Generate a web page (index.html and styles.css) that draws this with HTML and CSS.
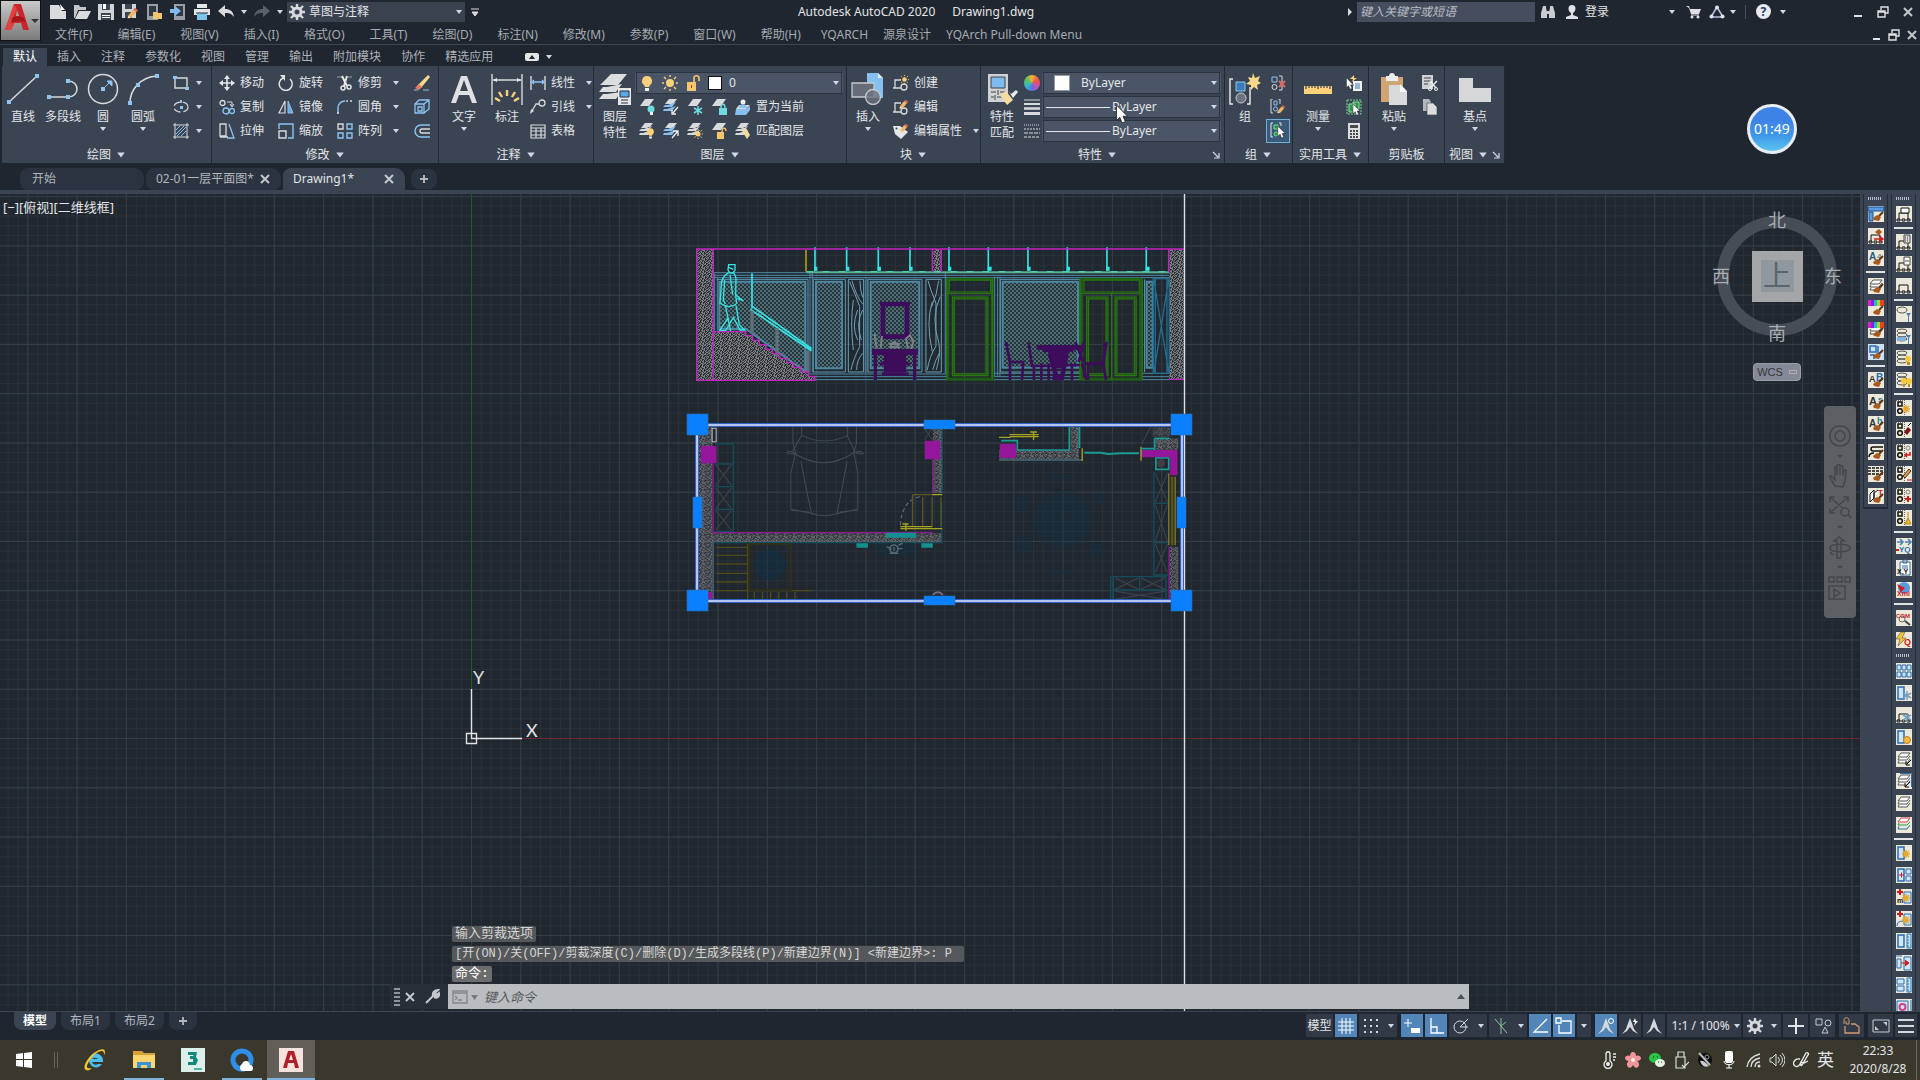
FILE: index.html
```
<!DOCTYPE html>
<html lang="zh-CN">
<head>
  <meta charset="utf-8">
  <title>Autodesk AutoCAD 2020 - Drawing1.dwg</title>
  <link rel="stylesheet" href="styles.css">
</head>
<body>
  <!-- shared icons -->
  <svg class="defs" width="0" height="0">
    <symbol id="caret" viewBox="0 0 8 8"><path d="M1 2h6L4 6z" fill="#d0d8e4"/></symbol>
    <symbol id="close" viewBox="0 0 12 12"><path d="M2 2l8 8M10 2l-8 8" stroke="#c3c7cc" stroke-width="2"/></symbol>
    <symbol id="restore" viewBox="0 0 12 12"><path d="M4 4V1h7v6H8M1 5h7v6H1zM1 6h7" fill="none" stroke="#e0e2e5" stroke-width="1.4"/></symbol>
    <symbol id="sheet" viewBox="0 0 16 16"><path d="M6 3h9l-5 7H1z" fill="#d9dadb"/></symbol>
    <symbol id="sheets" viewBox="0 0 16 16"><path d="M6 0h8l-4 5H2zM5 6H2L0 8h9l4-5M4 10H1l-1 2h9l4-5" fill="#d9dadb"/></symbol>
    <symbol id="bluesheets" viewBox="0 0 16 16"><path d="M6 0h8l-4 5H2z" fill="#d9dadb"/><path d="M5 6H2L0 8h9l4-5M4 10H1l-1 2h9l4-5" fill="#86bff0"/></symbol>
    <symbol id="bulb" viewBox="0 0 16 16"><path d="M8 1a5 5 0 0 0-3 9l1 2h4l1-2a5 5 0 0 0-3-9z" fill="#fbd27a"/><path d="M6 13h4v3H6z" fill="#eee"/></symbol>
    <symbol id="sun" viewBox="0 0 16 16"><circle cx="8" cy="8" r="4" fill="#fbd27a"/><path d="M8 0v2M8 14v2M0 8h2M14 8h2M2 2l2 2M12 12l2 2M14 2l-2 2M4 12l-2 2" stroke="#fbd27a" stroke-width="1.4"/></symbol>
    <symbol id="pencil" viewBox="0 0 16 16"><path d="M2 14l1-4 4 3z" fill="#fbe3b0"/><path d="M3 10L9 3l4 3-6 7z" fill="#f3b765"/><path d="M9 3l2-2 4 3-2 2z" fill="#d9655c"/></symbol>
    <symbol id="cursor" viewBox="0 0 12 18"><path d="M1 1v14l3-3 2 5 3-1-2-5h4z" fill="#fff" stroke="#222" stroke-width=".8"/></symbol>
    <symbol id="launch" viewBox="0 0 10 10"><path d="M2 2l5 5M8 3v5H3" fill="none" stroke="#d0d8e4" stroke-width="1.2"/></symbol>
    <symbol id="gear" viewBox="0 0 16 16"><circle cx="8" cy="8" r="4" fill="none" stroke="#d5d8dc" stroke-width="3"/><path d="M8 0v3M8 13v3M0 8h3M13 8h3M2 2l3 3M11 11l3 3M14 2l-3 3M5 11l-3 3" stroke="#d5d8dc" stroke-width="2.4"/></symbol>
    <symbol id="compass" viewBox="0 0 18 18"><path d="M9 1l3 8 1 3 4 5-5-3-3-4-3 4-5 3 4-5 1-3z" fill="#d5d8dc"/></symbol>
  </svg>

  <header class="app-header">
    <button class="app-button" aria-label="AutoCAD">
      <svg width="41" height="40" viewBox="0 0 41 40"><path d="M5 29L14 3h7l8 26h-6l-2-7h-7l-3 7z" fill="#c9252c"/><path d="M14 3l3 5-7 15 6-3-5 9H5z" fill="#e2423f"/><path d="M12 17c5-3 9-1 12 0l1 4c-5-2-9-1-13 1z" fill="#a3161c"/><path d="M16 15l1-6 2 6z" fill="#aaa"/><path d="M31 18h8l-4 4z" fill="#333"/></svg>
    </button>
    <div class="title-row">
      <div class="quick-access">
        <button aria-label="新建"><svg width="18" height="16"><path d="M1 1h9l3 6h4v8H1z" fill="#dadbdc"/><path d="M11 0l5 6h-4z" fill="#fff"/></svg></button>
        <button aria-label="打开"><svg width="18" height="16"><path d="M1 1h5l1 2h6v3H5l-3 8H1z" fill="#c5c6c8"/><path d="M6 7h12l-4 8H2z" fill="#dadbdc"/></svg></button>
        <button aria-label="保存"><svg width="18" height="16"><path d="M1 0h16v16H1z" fill="#d2d3d5"/><path d="M5 0h8v6H5zM4 9h10v7H4z" fill="#3b4453"/><path d="M6 0h3v5H6zM5 11h8v1H5zM5 13h8v1H5z" fill="#fff"/></svg></button>
        <button aria-label="另存为"><svg width="18" height="16"><path d="M1 0h14v14H1z" fill="#d2d3d5"/><path d="M4 0h7v5H4zM4 8h7v6H4z" fill="#3b4453"/><use href="#pencil" x="5" y="3" width="13" height="13"/></svg></button>
        <button aria-label="从移动设备打开"><svg width="18" height="16"><path d="M2 0h11v16H2z" fill="#9a9da2"/><path d="M4 2h7v10H4z" fill="#313945"/><path d="M8 8h4l1 1h4v6H8z" fill="#f5c66b"/></svg></button>
        <button aria-label="保存到移动设备"><svg width="18" height="16"><path d="M5 0h11v16H5z" fill="#9a9da2"/><path d="M7 2h7v10H7z" fill="#313945"/><path d="M1 5h5V2l6 5-6 5V9H1z" fill="#7dbdf0"/></svg></button>
        <button aria-label="打印"><svg width="18" height="16"><path d="M4 0h10v4H4zM1 5h16v6H1z" fill="#e5e6e7"/><path d="M4 9h10v7H4z" fill="#7cc3e8"/><path d="M3 9h12" stroke="#26303c"/></svg></button>
        <button aria-label="放弃"><svg width="18" height="16"><path d="M1 7l7-6v4c5 0 8 2 9 8-3-4-5-4-9-4v4z" fill="#dadbdc"/></svg></button>
        <button class="slim" aria-label="放弃列表"><svg width="8" height="8"><use href="#caret"/></svg></button>
        <button aria-label="重做"><svg width="18" height="16"><path d="M17 7l-7-6v4C5 5 2 7 1 13c3-4 5-4 9-4v4z" fill="#59606b"/></svg></button>
        <button class="slim" aria-label="重做列表"><svg width="8" height="8"><use href="#caret"/></svg></button>
      </div>
      <label class="workspace">
        <svg width="16" height="16"><use href="#gear"/></svg>
        <select aria-label="工作空间"><option>草图与注释</option></select>
        <svg width="8" height="8"><use href="#caret"/></svg>
      </label>
      <button class="overflow" aria-label="自定义"><svg width="10" height="8"><path d="M1 1h8M2 4h6L5 8z" fill="#dadbdc" stroke="#dadbdc"/></svg></button>
      <h1 class="app-title"><span>Autodesk AutoCAD 2020</span><span>Drawing1.dwg</span></h1>
      <div class="info-center">
        <svg width="6" height="10"><path d="M1 1l4 4-4 4z" fill="#dadbdc"/></svg>
        <input type="text" aria-label="搜索" placeholder="键入关键字或短语">
        <button aria-label="搜索"><svg width="14" height="14"><path d="M2 1h3v2l1 4v6H0V8zM9 1h3l2 7v5H8V7l1-4zM6 6h2v3H6z" fill="#c9ccd0"/></svg></button>
        <button class="login"><svg width="14" height="14"><path d="M7 0c5 0 4 7 1 8v2l5 2v2H1v-2l5-2V8C3 7 2 0 7 0z" fill="#dfe1e4"/></svg>登录</button>
        <button class="slim login-caret" aria-label="登录列表"><svg width="8" height="8"><use href="#caret"/></svg></button>
        <button aria-label="商店"><svg width="15" height="14"><path d="M0 1h3l1 3h11l-2 5H5L3 3" fill="#dfe1e4"/><path d="M5 10h8" stroke="#dfe1e4"/><circle cx="6" cy="12" r="1.500" fill="#dfe1e4"/><circle cx="12" cy="12" r="1.500" fill="#dfe1e4"/></svg></button>
        <button class="a360" aria-label="Autodesk 360"><svg width="16" height="14"><path d="M8 2L2 12h12z" fill="none" stroke="#b7bedb" stroke-width="1.600"/><circle cx="8" cy="2.500" r="2" fill="#dfe1f0"/><circle cx="2.500" cy="11.500" r="2" fill="#dfe1f0"/><circle cx="13.500" cy="11.500" r="2" fill="#dfe1f0"/></svg><svg width="8" height="8"><use href="#caret"/></svg></button>
        <button class="help" aria-label="帮助"><b>?</b><svg width="8" height="8"><use href="#caret"/></svg></button>
      </div>
      <div class="window-buttons">
        <button aria-label="最小化"><svg width="12" height="12"><path d="M2 10h8" stroke="#e0e2e5" stroke-width="2"/></svg></button>
        <button aria-label="还原"><svg width="12" height="12"><use href="#restore"/></svg></button>
        <button aria-label="关闭"><svg width="12" height="12"><use href="#close"/></svg></button>
      </div>
    </div>
    <div class="menu-row">
      <nav class="menu">
        <a href="#">文件(F)</a><a href="#">编辑(E)</a><a href="#">视图(V)</a><a href="#">插入(I)</a><a href="#">格式(O)</a><a href="#">工具(T)</a><a href="#">绘图(D)</a><a href="#">标注(N)</a><a href="#">修改(M)</a><a href="#">参数(P)</a><a href="#">窗口(W)</a><a href="#">帮助(H)</a><a href="#" class="extra">YQARCH</a><a href="#" class="extra">源泉设计</a><a href="#" class="extra">YQArch Pull-down Menu</a>
      </nav>
      <div class="window-buttons small">
        <button aria-label="最小化图形"><svg width="11" height="12"><path d="M2 10h7" stroke="#e0e2e5" stroke-width="2"/></svg></button>
        <button aria-label="还原图形"><svg width="12" height="12"><use href="#restore"/></svg></button>
        <button aria-label="关闭图形"><svg width="12" height="12"><use href="#close"/></svg></button>
      </div>
    </div>
  </header>

  <nav class="ribbon-tabs">
    <a href="#" class="active">默认</a><a href="#">插入</a><a href="#">注释</a><a href="#">参数化</a><a href="#">视图</a><a href="#">管理</a><a href="#">输出</a><a href="#">附加模块</a><a href="#">协作</a><a href="#">精选应用</a>
    <button aria-label="最小化功能区"><svg width="14" height="10"><rect y="1" width="14" height="8" rx="2" fill="#e3e5e7"/><path d="M4 7h6L7 3z" fill="#222"/></svg><svg width="8" height="8"><use href="#caret"/></svg></button>
  </nav>

  <div class="ribbon">
    <section class="panel draw">
      <div class="panel-body">
        <button class="big"><svg width="34" height="32"><path d="M3 29L31 3" stroke="#d8dadd" stroke-width="1.500"/><path d="M1 27h4v4H1zM29 1h4v4h-4z" fill="#8cc4f2"/></svg>直线</button>
        <button class="big"><svg width="34" height="32"><path d="M3 24h19c12 0 12-16 0-16" fill="none" stroke="#d8dadd" stroke-width="1.500"/><path d="M1 22h4v4H1zM20 22h4v4h-4zM20 6h4v4h-4z" fill="#8cc4f2"/></svg>多段线</button>
        <button class="big"><svg width="32" height="32"><circle cx="16" cy="16" r="14.500" fill="none" stroke="#d8dadd" stroke-width="1.500"/><path d="M16 16l7-7M20 8h5v5z" stroke="#8cc4f2" fill="#8cc4f2"/><path d="M14 14h4v4h-4z" fill="#8cc4f2"/></svg>圆<svg width="8" height="8"><use href="#caret"/></svg></button>
        <button class="big"><svg width="32" height="32"><path d="M3 30C3 16 14 4 30 3" fill="none" stroke="#d8dadd" stroke-width="1.500"/><path d="M1 28h4v4H1zM9 10h4v4H9zM28 1h4v4h-4z" fill="#8cc4f2"/></svg>圆弧<svg width="8" height="8"><use href="#caret"/></svg></button>
        <div class="stack icons">
          <button aria-label="矩形"><svg width="16" height="16"><path d="M2 3h12v10H2z" fill="none" stroke="#d8dadd" stroke-width="1.400"/><path d="M0 1h4v3H0zM12 12h4v3h-4z" fill="#8cc4f2"/></svg><svg width="8" height="8"><use href="#caret"/></svg></button>
          <button aria-label="椭圆"><svg width="16" height="16"><ellipse cx="8" cy="8" rx="7" ry="5" fill="none" stroke="#d8dadd" stroke-width="1.300" stroke-dasharray="7 3"/><path d="M7 7h3v3H7zM7 1h2v3H7z" fill="#8cc4f2"/></svg><svg width="8" height="8"><use href="#caret"/></svg></button>
          <button aria-label="图案填充"><svg width="16" height="16"><path d="M0 2h16M0 14h16M2 0v16M14 0v16" stroke="#d8dadd"/><path d="M3 7l4-4M3 11l8-8M4 13l9-9M8 13l5-5" stroke="#8cc4f2"/></svg><svg width="8" height="8"><use href="#caret"/></svg></button>
        </div>
      </div>
      <h2>绘图<svg width="10" height="10"><use href="#caret"/></svg></h2>
    </section>

    <section class="panel modify">
      <div class="panel-body">
        <div class="stack">
          <button><svg width="16" height="16"><path d="M8 1v14M1 8h14" stroke="#e5e6e8" stroke-width="1.600"/><path d="M8 0l3 4H5zM8 16l3-4H5zM0 8l4-3v6zM16 8l-4-3v6z" fill="#e5e6e8"/></svg>移动</button>
          <button><svg width="16" height="16"><circle cx="3.500" cy="4" r="2.500" fill="none" stroke="#d8dadd" stroke-width="1.300"/><circle cx="7" cy="12" r="3" fill="none" stroke="#8cc4f2" stroke-width="1.300"/><circle cx="13" cy="12" r="2.500" fill="none" stroke="#8cc4f2" stroke-width="1.300"/><path d="M8 3h5v4M11 5l2 3 2-3" fill="none" stroke="#d8dadd"/></svg>复制</button>
          <button><svg width="16" height="16"><path d="M1 1h6v12H1zM1 14h8" fill="none" stroke="#d8dadd" stroke-width="1.300"/><path d="M10 1l5 14H8" fill="none" stroke="#8cc4f2" stroke-width="1.300"/></svg>拉伸</button>
        </div>
        <div class="stack">
          <button><svg width="16" height="16"><path d="M5 3a6.500 6.500 0 1 0 7 1" fill="none" stroke="#e0e2e4" stroke-width="1.500"/><path d="M2 0h5v6z" fill="#e0e2e4"/></svg>旋转</button>
          <button><svg width="16" height="16"><path d="M7 2v12H1z" fill="none" stroke="#d8dadd" stroke-width="1.200"/><path d="M10 2v12h5z" fill="#6aa7dc" stroke="#8cc4f2"/></svg>镜像</button>
          <button><svg width="16" height="16"><path d="M1 6V1h14v14h-5" fill="none" stroke="#8cc4f2" stroke-width="1.400"/><path d="M1 8h7v7H1z" fill="none" stroke="#d8dadd" stroke-width="1.400"/></svg>缩放</button>
        </div>
        <div class="stack">
          <button><svg width="16" height="16"><path d="M0 2h5M11 2h4" stroke="#9aa1ab"/><path d="M5 1l5 10M10 1L7 11" stroke="#e5e6e8" stroke-width="2"/><circle cx="6" cy="13" r="2" fill="none" stroke="#e5e6e8" stroke-width="1.500"/><circle cx="12" cy="12" r="2" fill="none" stroke="#e5e6e8" stroke-width="1.500"/></svg>修剪<svg class="caret" width="8" height="8"><use href="#caret"/></svg></button>
          <button><svg width="16" height="16"><path d="M1 15V9c0-4 3-7 7-7" fill="none" stroke="#8cc4f2" stroke-width="1.500"/><path d="M9 2h2M13 2h2M1 13v2" stroke="#d8dadd" stroke-width="1.500"/></svg>圆角<svg class="caret" width="8" height="8"><use href="#caret"/></svg></button>
          <button><svg width="16" height="16"><path d="M1 1h5v5H1z" fill="none" stroke="#d8dadd" stroke-width="1.400"/><path d="M10 1h5v5h-5zM1 10h5v5H1zM10 10h5v5h-5z" fill="none" stroke="#8cc4f2" stroke-width="1.400"/></svg>阵列<svg class="caret" width="8" height="8"><use href="#caret"/></svg></button>
        </div>
        <div class="stack">
          <button aria-label="删除"><svg width="16" height="16"><path d="M14 0l2 2-9 11-4-2z" fill="#fbd68d"/><path d="M5 9l3 3-3 3-4-2z" fill="#ea7a66"/><path d="M0 15h4M9 15h6" stroke="#8cc4f2"/></svg></button>
          <button aria-label="分解"><svg width="16" height="16"><path d="M1 5h9v9H1zM1 5l4-4h10v9l-5 4M10 5l5-4M4 8h4v4H4z" fill="none" stroke="#8cc4f2" stroke-width="1.300"/></svg></button>
          <button aria-label="偏移"><svg width="16" height="16"><path d="M16 2H7a6 6 0 0 0 0 12h9" fill="none" stroke="#8cc4f2" stroke-width="1.400"/><path d="M16 6H8a2 2 0 0 0 0 4h8" fill="none" stroke="#d8dadd" stroke-width="1.300"/></svg></button>
        </div>
      </div>
      <h2>修改<svg width="10" height="10"><use href="#caret"/></svg></h2>
    </section>

    <section class="panel annotate">
      <div class="panel-body">
        <button class="big"><svg width="28" height="32"><path d="M11 3h6l10 27h-5l-3-8H9l-3 8H1zM10 18h8L14 7z" fill="#dfe0e1"/></svg>文字<svg width="8" height="8"><use href="#caret"/></svg></button>
        <button class="big"><svg width="32" height="32"><path d="M1 1v31M31 1v31M2 7h28" stroke="#d8dadd" stroke-width="1.400"/><path d="M2 7l4-2v4zM30 7l-4-2v4z" fill="#e5e6e8"/><path d="M16 17v6M8 19l3 5M24 19l-3 5M4 25l5 3M28 25l-5 3" stroke="#fbd27a" stroke-width="2.400"/></svg>标注</button>
        <div class="stack">
          <button><svg width="16" height="16"><path d="M1 1v14M15 1v14" stroke="#d8dadd" stroke-width="1.400"/><path d="M2 7h12M4 5L2 7l2 2M12 5l2 2-2 2" fill="none" stroke="#8cc4f2" stroke-width="1.300"/></svg>线性<svg class="caret" width="8" height="8"><use href="#caret"/></svg></button>
          <button><svg width="16" height="16"><circle cx="12" cy="4" r="3" fill="none" stroke="#d8dadd" stroke-width="1.300"/><path d="M9 5H6l-4 7" fill="none" stroke="#d8dadd" stroke-width="1.300"/><path d="M0 15l1-5 3 2z" fill="#d8dadd"/></svg>引线<svg class="caret" width="8" height="8"><use href="#caret"/></svg></button>
          <button><svg width="16" height="16"><path d="M1 2h14v13H1zM1 5h14M1 8h14M1 12h14M6 5v10M11 5v10" fill="none" stroke="#d8dadd" stroke-width="1.200"/></svg>表格</button>
        </div>
      </div>
      <h2>注释<svg width="10" height="10"><use href="#caret"/></svg></h2>
    </section>

    <section class="panel layers">
      <div class="panel-body">
        <button class="big tall"><svg width="32" height="32"><path d="M12 1h16l-9 11H1zM8 14H4l-4 5h17l6-8M8 21H4l-4 5h17l5-7" fill="#dcdddd"/><path d="M19 15h13v17H19z" fill="#e5e6e8"/><path d="M21 18h9v6h-9z" fill="#5aa9e6" stroke="#26303c"/><path d="M22 27h7M22 30h7" stroke="#26303c"/></svg>图层<br>特性</button>
        <div class="stack">
          <div class="combo">
            <svg width="16" height="16"><use href="#bulb"/></svg>
            <svg width="16" height="16"><use href="#sun"/></svg>
            <svg width="16" height="16"><path d="M2 7h9v9H2z" fill="#f5c66b"/><path d="M9 7V3c0-3 5-3 5 0v3" fill="none" stroke="#f5c66b" stroke-width="1.600"/><path d="M6 10h1v3H6z" fill="#a33"/></svg>
            <i class="swatch"></i>
            <select aria-label="图层"><option>0</option></select>
            <svg width="8" height="8"><use href="#caret"/></svg>
          </div>
          <div class="tool-row">
            <button aria-label="关"><svg width="16" height="16"><use href="#sheet" y="-3"/><circle cx="12" cy="10" r="3.500" fill="#6fdbe0"/><path d="M11 13h3v3h-3z" fill="#eee"/></svg></button>
            <button aria-label="隔离"><svg width="16" height="16"><use href="#bluesheets"/><path d="M15 8l-5 6M9 11v4h4" fill="none" stroke="#eee" stroke-width="1.300"/></svg></button>
            <button aria-label="冻结"><svg width="16" height="16"><use href="#sheet" y="-3"/><path d="M11 7v9M7 9l8 5M15 9l-8 5" stroke="#6fdbe0" stroke-width="1.500"/></svg></button>
            <button aria-label="锁定"><svg width="16" height="16"><use href="#sheet" y="-3"/><path d="M8 9h8v7H8z" fill="#6fdbe0"/><path d="M10 9c0-5 4-5 4 0" fill="none" stroke="#6fdbe0" stroke-width="1.400"/></svg></button>
            <button class="labelled"><svg width="16" height="16"><path d="M4 6h11l-4 4H1z" fill="#d9dadb"/><path d="M1 10h10l4-3v4l-4 5H0z" fill="#86bff0"/><circle cx="8" cy="3" r="2.500" fill="#eee"/><path d="M4 9c0-5 8-5 8 0z" fill="#86bff0"/></svg>置为当前</button>
          </div>
          <div class="tool-row">
            <button aria-label="打开所有图层"><svg width="16" height="16"><use href="#sheets"/><use href="#bulb" x="6" y="4" width="11" height="12"/></svg></button>
            <button aria-label="取消隔离"><svg width="16" height="16"><use href="#bluesheets"/><path d="M9 15l6-7M10 8h5v5" fill="none" stroke="#eee" stroke-width="1.300"/></svg></button>
            <button aria-label="解冻所有图层"><svg width="16" height="16"><use href="#sheets"/><use href="#sun" x="6" y="6" width="10" height="10"/></svg></button>
            <button aria-label="解锁"><svg width="16" height="16"><use href="#sheet" y="-3"/><path d="M6 9h7v7H6z" fill="#f5c66b"/><path d="M11 9c0-6 4-4 4-1" fill="none" stroke="#f5c66b" stroke-width="1.400"/></svg></button>
            <button class="labelled"><svg width="16" height="16"><use href="#sheets"/><path d="M7 8l4-3 4 7-3 4z" fill="#f4dca0"/></svg>匹配图层</button>
          </div>
        </div>
      </div>
      <h2>图层<svg width="10" height="10"><use href="#caret"/></svg></h2>
    </section>

    <section class="panel block">
      <div class="panel-body">
        <button class="big"><svg width="34" height="32"><path d="M16 0h11l5 5v20H16z" fill="#85c0f0"/><path d="M27 0l5 5h-5z" fill="#d9ecfb"/><path d="M1 10h22v14H1z" fill="#666d78" stroke="#c6c9cd" stroke-width="1.300"/><circle cx="22" cy="24" r="7.500" fill="#6d737ecc" stroke="#c6c9cd" stroke-width="1.300"/></svg>插入<svg width="8" height="8"><use href="#caret"/></svg></button>
        <div class="stack">
          <button><svg width="16" height="16"><path d="M8 5H2v8h6M0 13h3" fill="none" stroke="#d8dadd" stroke-width="1.300"/><circle cx="11" cy="12" r="3" fill="none" stroke="#d8dadd" stroke-width="1.300"/><use href="#sun" x="7" y="0" width="9" height="9"/></svg>创建</button>
          <button><svg width="16" height="16"><path d="M8 4H2v9h6M0 13h3" fill="none" stroke="#d8dadd" stroke-width="1.300"/><circle cx="11" cy="12" r="3" fill="none" stroke="#d8dadd" stroke-width="1.300"/><use href="#pencil" x="5" y="0" width="11" height="11"/></svg>编辑</button>
          <button><svg width="16" height="16"><path d="M0 3h7l8 6-7 7-6-5z" fill="#e5e6e8"/><circle cx="3.500" cy="5.500" r="1" fill="#3b4453"/><use href="#pencil" x="5" y="0" width="11" height="11"/></svg>编辑属性<svg class="caret" width="8" height="8"><use href="#caret"/></svg></button>
        </div>
      </div>
      <h2>块<svg width="10" height="10"><use href="#caret"/></svg></h2>
    </section>

    <section class="panel properties">
      <div class="panel-body">
        <button class="big tall"><svg width="32" height="32"><path d="M2 1h20v28H2z" fill="#cfd1d4"/><path d="M5 4h14v11H5z" fill="#7cbcf0" stroke="#444"/><path d="M5 19h5M12 17v5M14 19h5M5 24h3M9 22v5M11 24h6" stroke="#444"/><path d="M14 22l6-4 7 9-6 5z" fill="#f4dca0"/><path d="M22 17l3 4 5-4 2 2-5 6" fill="#e9eaec"/></svg>特性<br>匹配</button>
        <div class="stack prop-icons">
          <button aria-label="颜色"><i class="color-wheel"></i></button>
          <button aria-label="线宽"><svg width="16" height="16"><path d="M0 1h16" stroke="#d8dadd"/><path d="M0 5h16" stroke="#d8dadd" stroke-width="2"/><path d="M0 9.500h16" stroke="#d8dadd" stroke-width="2.500"/><path d="M0 14.500h16" stroke="#d8dadd" stroke-width="3"/></svg></button>
          <button aria-label="线型"><svg width="16" height="16"><path d="M0 2h16" stroke="#d8dadd" stroke-dasharray="1 1"/><path d="M0 6h16" stroke="#d8dadd" stroke-dasharray="2 1"/><path d="M0 10h16" stroke="#d8dadd" stroke-dasharray="4 1"/><path d="M0 14h16" stroke="#d8dadd" stroke-dasharray="3 1"/></svg></button>
        </div>
        <div class="stack">
          <div class="combo color"><i class="swatch plain"></i><select aria-label="对象颜色"><option>ByLayer</option></select><svg width="8" height="8"><use href="#caret"/></svg></div>
          <div class="combo line"><i class="rule"></i><select aria-label="线宽"><option>ByLayer</option></select><svg width="8" height="8"><use href="#caret"/></svg></div>
          <div class="combo line"><i class="rule"></i><select aria-label="线型"><option>ByLayer</option></select><svg width="8" height="8"><use href="#caret"/></svg></div>
        </div>
        <svg class="pointer" width="14" height="20"><use href="#cursor"/></svg>
      </div>
      <h2>特性<svg width="10" height="10"><use href="#caret"/></svg><svg class="launch" width="10" height="10"><use href="#launch"/></svg></h2>
    </section>

    <section class="panel group">
      <div class="panel-body">
        <button class="big"><svg width="32" height="32"><path d="M4 6H1v25h3M18 31h3V14" fill="none" stroke="#e5e6e8" stroke-width="1.500"/><path d="M7 9h9v9H7z" fill="#3b7cb8" stroke="#8cc4f2"/><circle cx="12" cy="25" r="5" fill="#6d737e" stroke="#c6c9cd"/><path d="M24 0l2 5 5-2-2 5 3 2-4 2 1 5-4-3-3 3v-5l-5-1 4-3-2-4 4 1z" fill="#fbd98a"/></svg>组</button>
        <div class="stack icons">
          <button aria-label="解除编组"><svg width="16" height="16"><path d="M2 2h5v5H2z" fill="none" stroke="#8cc4f2"/><circle cx="4.500" cy="12" r="2.500" fill="none" stroke="#d8dadd"/><path d="M9 1h3v14H9" fill="none" stroke="#d8dadd"/><path d="M9 6l6 6M15 6l-6 6" stroke="#e06666" stroke-width="2"/></svg></button>
          <button aria-label="组编辑"><svg width="16" height="16"><path d="M3 0H1v14h2M8 0h2v5" fill="none" stroke="#d8dadd"/><path d="M4 2h3v4H4z" fill="none" stroke="#8cc4f2"/><circle cx="5.500" cy="10" r="2" fill="none" stroke="#8cc4f2"/><use href="#pencil" x="6" y="5" width="10" height="11"/></svg></button>
          <button class="on" aria-label="启用组选择"><svg width="16" height="18"><path d="M3 1H1v14h2M9 1h2v3" fill="none" stroke="#e5e6e8"/><path d="M4 3h4v4H4z" fill="#2f8f4e" stroke="#6fe08e"/><circle cx="6" cy="12" r="2" fill="#2f8f4e" stroke="#6fe08e"/><use href="#cursor" x="7" y="3" width="9" height="14"/></svg></button>
        </div>
      </div>
      <h2>组<svg width="10" height="10"><use href="#caret"/></svg></h2>
    </section>

    <section class="panel utilities">
      <div class="panel-body">
        <button class="big"><svg width="30" height="32"><path d="M1 13h28v8H1z" fill="#fbd27a"/><path d="M3 12v4M6 12v3M9 12v3M12 12v3M15 12v4M18 12v3M21 12v3M24 12v3M27 12v4" stroke="#3b4453" stroke-width="1.200"/></svg>测量<svg width="8" height="8"><use href="#caret"/></svg></button>
        <div class="stack icons">
          <button aria-label="快速选择"><svg width="16" height="16"><path d="M7 6h9v10H7z" fill="#f2f3f4"/><path d="M9 9h5M9 11h5M9 13h5" stroke="#3b7cb8"/><use href="#cursor" x="-1" y="2" width="10" height="13"/><path d="M8 0L4 4h3L6 7l5-4H8z" fill="#fbd27a"/></svg></button>
          <button aria-label="全部选择"><svg width="16" height="16"><path d="M1 1h14v14H1z" fill="none" stroke="#6fe08e" stroke-dasharray="2 1"/><path d="M3 5h6v8H3zM7 3h6v7H7z" fill="#2f8f4e" stroke="#8cecaa"/><use href="#cursor" x="6" y="4" width="9" height="13"/></svg></button>
          <button aria-label="快速计算器"><svg width="16" height="16"><path d="M2 0h12v16H2z" fill="#dcdddd"/><path d="M4 2h8v3H4z" fill="#4a4a4a"/><path d="M4 8h8M4 11h8M4 14h8" stroke="#4a4a4a" stroke-width="2" stroke-dasharray="2 1"/></svg></button>
        </div>
      </div>
      <h2>实用工具<svg width="10" height="10"><use href="#caret"/></svg></h2>
    </section>

    <section class="panel clipboard">
      <div class="panel-body">
        <button class="big"><svg width="28" height="32"><path d="M1 4h22v25H1z" fill="#cfa574"/><path d="M6 3h3c0-4 6-4 6 0h3v5H6z" fill="#eee"/><path d="M9 12h12l6 6v14H9z" fill="#d9dadc"/><path d="M20 11l7 8h-7z" fill="#fff"/></svg>粘贴<svg width="8" height="8"><use href="#caret"/></svg></button>
        <div class="stack icons">
          <button aria-label="剪切"><svg width="16" height="16"><path d="M0 0h11v14H0z" fill="#cfd1d4"/><path d="M2 3h7M2 6h7M2 9h4" stroke="#444"/><path d="M8 6l6 7M15 6l-7 7" stroke="#eee" stroke-width="1.500"/><circle cx="8" cy="14" r="1.500" fill="none" stroke="#eee"/><circle cx="14" cy="14" r="1.500" fill="none" stroke="#eee"/></svg></button>
          <button aria-label="复制剪裁"><svg width="16" height="16"><path d="M1 0h6l2 3v9H1z" fill="#b4b7bb"/><path d="M5 4h6l4 4v8H5z" fill="#dcdddd" stroke="#3b4453" stroke-width=".6"/></svg></button>
        </div>
      </div>
      <h2>剪贴板</h2>
    </section>

    <section class="panel view">
      <div class="panel-body">
        <button class="big"><svg width="32" height="32"><path d="M0 5h14v10h18v14H0z" fill="#d6d7d9"/></svg>基点<svg width="8" height="8"><use href="#caret"/></svg></button>
      </div>
      <h2>视图<svg width="10" height="10"><use href="#caret"/></svg><svg class="launch" width="10" height="10"><use href="#launch"/></svg></h2>
    </section>
  </div>

  <nav class="file-tabs">
    <a href="#" class="start">开始</a>
    <a href="#">02-01一层平面图*<svg width="12" height="12"><use href="#close"/></svg></a>
    <a href="#" class="active">Drawing1*<svg width="12" height="12"><use href="#close"/></svg></a>
    <button aria-label="新图形"><svg width="10" height="10"><path d="M5 1v8M1 5h8" stroke="#b3b7bd" stroke-width="2"/></svg></button>
  </nav>

  <main class="workspace-area">
    <div class="canvas">
      <svg class="drawing" width="100%" height="100%">
        <defs>
          <pattern id="minor" width="9.860" height="9.860" x="471" y="544" patternUnits="userSpaceOnUse"><path d="M.5 0v9.860M0 .5h9.860" stroke="#28303a"/></pattern>
          <pattern id="major" width="49.300" height="49.250" x="471" y="544" patternUnits="userSpaceOnUse"><path d="M.5 0v49.300M0 .5h49.300" stroke="#333d48"/></pattern>
          <pattern id="concrete" width="27" height="27" patternUnits="userSpaceOnUse"><path d="M0 1h6M12 1h3M21 1h3M3 4h3M9 4h6M18 4h3M24 4h3M0 7h3M12 7h3M15 7h6M6 10h6M18 10h3M24 10h3M3 13h3M9 13h3M15 13h3M21 13h3M0 16h3M6 16h3M12 16h6M24 16h3M3 19h6M15 19h3M21 19h3M0 22h3M9 22h6M18 22h6M6 25h3M12 25h3M15 25h3M24 25h3" stroke="#8f8f8f" stroke-width="3"/></pattern>
          <pattern id="lattice" width="12" height="12" patternUnits="userSpaceOnUse"><path d="M0 0h12v12H0z" fill="#20343c"/><path d="M1 1h4v4H1zM7 7h4v4H7z" fill="#8aa9ae"/></pattern>
        </defs>
        <rect width="100%" height="100%" fill="url(#minor)"/>
        <rect width="100%" height="100%" fill="url(#major)"/>
        <path d="M471.500 0v495" stroke="#1f5a2b"/>
        <path d="M522 544.500h1400" stroke="#6b2a2e"/>

        <!-- interior elevation -->
        <g transform="translate(680 36) scale(.3333)" fill="none">
          <g stroke="#4d88a2" stroke-width="3">
            <path d="M100 128h1368M100 136h1368M100 143h1368M385 432h418M385 440h418M385 449h418M942 430h258M942 440h258M942 449h258M1386 430h82M1386 440h82M1386 449h82"/>
            <path d="M104 130v172M112 145v157M390 128v300M397 128v300M556 145v285M561 145v285M796 130v300M944 140v300M953 140v300M960 140v300"/>
          </g>
          <path d="M118 155h258v270l-178-128h-80zM408 155h78v260h-78zM572 155h146v260H572zM968 155h226v258H968zM1400 155h18v258h-18z" fill="url(#lattice)" stroke="#4d88a2" stroke-width="6"/>
          <path d="M400 148h96v278h-96zM564 148h162v278H564zM961 148h240v278H961zM110 148h274v268M1394 148v278" stroke="#5f9bb4" stroke-width="3"/>
          <path d="M198 305v12h20v14h20v13h20v14h20v13h22v14h21v13h20v14h22v13h22v14h20v10H100V305z" fill="#20272f"/>
          <path d="M50 57h50v393H50zM760 57h24v70h-24zM1468 57h44v393h-44zM100 305h98v12h20v14h20v13h20v14h20v13h22v14h21v13h20v14h22v13h22v14h20v12H100z" fill="url(#concrete)"/>
          <g stroke="#6fa3b8" stroke-width="3">
            <path d="M505 148h46v278h-46zM738 148h46v278h-46z"/>
            <path d="M509 155q18 40 30 75v120q-20 40-26 70M516 152q14 50 32 70M548 240q-22 40-4 90M540 152q0 30 8 50M520 210q-10 70 0 150M533 240q-20 50 0 90M530 420q0-30 18-50"/>
            <path d="M742 420q6-40 26-72V220q-16-40-24-68M776 152q-4 40-22 80M781 200q-30 60-4 140q6 30-8 80M757 215q-20 60 0 150M778 370q-12 20-20 50"/>
          </g>
          <path d="M378 60v65" stroke="#8e8a18" stroke-width="6"/>
          <path d="M380 127h1088" stroke="#58b38e" stroke-width="6"/>
          <path d="M380 125h1088" stroke="#49e0c2" stroke-width="3" stroke-dasharray="20 28"/>
          <g stroke="#35e4e4" stroke-width="5">
            <path d="M405 52v70M500 52v70M595 52v70M690 52v70M807 52v70M925 52v70M1044 52v70M1162 52v70M1281 52v70M1399 52v70"/>
            <path d="M402 116h10M498 116h10M593 116h10M688 116h10M804 116h10M923 116h12M1042 116h10M1160 116h10M1279 116h10M1397 116h12" stroke-width="12"/>
            <path d="M216 130v106M211 238l180 122M218 230l174 124M392 350v14" stroke-width="5"/>
            <path d="M146 104h19v17l-7 8h-8l-6-9zM146 128q-22 14-22 36l-4 56 22 10q24-2 28-10l-3-24 1-50q-4-20-12-18M134 150l-4 60 6 12M150 134l8 60M168 195l22 18-18-8M136 226l8 38-25 38h18l23-40 20 38h14l-16-16-10-58M144 264l8 40M146 112l14 6" stroke-width="4"/>
            <path d="M116 304h78" stroke-width="3"/>
          </g>
          <path d="M216 242v70M291 295v85M383 362v66" stroke="#607078" stroke-width="10"/>
          <path d="M100 305h98v12h20v14h20v13h20v14h20v13h22v14h21v13h20v14h22v13h22v14h20v12H50V57h1462M100 57v393M757 57v70M784 57v70M1466 57v70M1466 448h46" stroke="#c223c2" stroke-width="4"/>
          <g stroke="#2c7d12">
            <path d="M803 148h134v300H803zM1204 148h178v300h-178z" stroke-width="9" stroke="#205c14"/>
            <path d="M808 150h124v36H808zM800 190h137M1212 150h166v36h-166zM1204 190h178M800 146v302M937 146v302M1200 146v302M1387 146v302M1295 190v258" stroke-width="3"/>
            <path d="M820 204h101v230H820zM1223 204h58v230h-58zM1308 204h58v230h-58z" stroke-width="9"/>
            <path d="M820 204h101v230H820zM1223 204h58v230h-58zM1308 204h58v230h-58z" stroke-width="2" stroke="#1d3d1a"/>
          </g>
          <path d="M1420 146h48v284h-48zM1426 146v284M1461 146v284M1422 150l44 276M1466 150l-44 276" stroke="#216e90" stroke-width="4"/>
          <g stroke="#3d0d5c">
            <path d="M609 222h72v98h-72z" stroke-width="14"/>
            <path d="M600 222h90M603 320h84" stroke-width="10"/>
            <path d="M576 366h138" stroke-width="18"/>
            <path d="M586 366v84M704 366v84" stroke-width="10"/>
            <path d="M600 405q44-30 90 0M606 432h80" stroke-width="10"/>
            <path d="M612 374h66v52h-66z" fill="#3d0d5c"/>
            <path d="M1070 352h134M1090 360h90M1110 372l20 70M1160 372l-14 70M1118 444h34" stroke-width="14"/>
            <path d="M978 336l12 60h42M990 396v54M1030 396l-4 54M1046 338l10 70h60M1062 408v42M1084 400v50M1106 400v50M1150 405h50M1186 336l24 60M1206 400l14 50M1176 405v45M1212 336l-16 60M1280 336l-10 64h-54M1224 400v50M1270 400l8 50M1282 338l-12 8" stroke-width="8"/>
            <path d="M1100 355h70l-25 60h-22z" fill="#3d0d5c"/>
          </g>
          <path d="M590 356l-6-44M602 356l4-38M632 352q8-30 24 0zM684 356l-6-30 12-10 10 18-6 22M626 342h34" stroke="#7d7f86" stroke-width="6"/>
        </g>

        <!-- clipped floor plan -->
        <g transform="translate(680 206) scale(.338 .3333)" fill="none">
          <path d="M56 80h40v520H56zM96 400h680v28H96zM748 80h28v200h-28zM944 150h236v28H944zM1156 80h24v90h-24zM1406 115h68v34h-68zM1448 440h26v160h-26z" fill="url(#concrete)" opacity=".8"/>
          <path d="M62 138h46v52H62zM724 122h46v56h-46zM946 132h48v42h-48zM1362 150h110v76h-22v-54h-88zM82 576h13v20H82z" fill="#94169a"/>
          <path d="M98 190v208M98 398h650M748 180v98M1447 440v160" stroke="#8d1a92" stroke-width="4"/>
          <g stroke="#144c5c" stroke-width="4">
            <path d="M104 132h54v262h-54M158 192h-54M158 260h-54M158 328h-54M1402 215v310h42M1402 310h42M1402 428h42M1274 530h164v70M1274 530v70M1282 530v70M1282 570h156M1360 530v40M98 428h676v-120M776 80v200" />
          </g>
          <path d="M98 428v170M944 180h245" stroke="#49687a" stroke-width="4"/>
          <path d="M106 194l46 62M152 194l-46 62M106 264l46 62M152 264l-46 62M106 332l46 58M152 332l-46 58M1406 220l36 86M1442 220l-36 86M1406 314l36 110M1442 314l-36 110M1406 432l36 86M1442 432l-36 86M1288 534l68 34M1356 534l-68 34M1364 534l70 34M1434 534l-70 34M1288 574l146 24M1434 574l-146 24M1392 82l-26 50M724 85l22 34M746 85l-22 34" stroke="#3d464f" stroke-width="3"/>
          <!-- car -->
          <path d="M334 80v50l8 28-14 60v110l60 12q40 14 80 0l58-12V218l-12-60 8-28V80M360 80v26q68 34 136 0V80M360 106l-28 50q94 64 186 0l-24-50M358 184q14 80 32 160M494 184q-14 80-30 160M316 158q10-8 20 0t-20 0M520 158q10-8 20 0t-20 0M328 330l54 6M526 330l-54 6" stroke="#434b54" stroke-width="3"/>
          <path d="M652 376q6-80 62-86" stroke="#687078" stroke-width="3" stroke-dasharray="12 8"/>
          <path d="M688 284h60M688 284v94M718 290v90M746 290v90M772 290v90" stroke="#5b5624" stroke-width="4"/>
          <g stroke="#a5a520" stroke-width="4">
            <path d="M746 284h30M746 386h30M652 380h94M652 386h94M668 370v22M658 372h18M944 112h34M975 104h86M975 110h86M1046 94v26M1036 96h20M1190 145v38M1364 140v42"/>
          </g>
          <path d="M1446 220v216M1465 230v206" stroke="#7f7d22" stroke-width="4"/>
          <path d="M1456 230v206" stroke="#59541f" stroke-width="8"/>
          <path d="M950 122h48v28h154V80M1182 80v64M1404 115h44M1404 115v35M1364 146h40M1408 174h38v34h-38z" stroke="#1b9a96" stroke-width="5"/>
          <path d="M1196 158h50l20 4 40-2h52" stroke="#1b9a96" stroke-width="6"/>
          <path d="M1398 82h52v28h-52z" fill="url(#concrete)" opacity=".5"/>
          <circle cx="1423" cy="190" r="12" fill="#453c41"/>
          <path d="M610 398h88v15h-88zM522 430h34v13h-34zM714 430h34v13h-34z" fill="#168f90"/>
          <circle cx="633" cy="447" r="12" stroke="#777c80" stroke-width="5"/>
          <path d="M612 440l14 8M646 436l12-6M644 446h14M620 460h26M633 440v14" stroke="#777c80" stroke-width="4"/>
          <path d="M106 442h94M106 466h94M106 492h94M106 520h94M106 546h94M106 572h286M200 432v166M220 576v22M244 576v22M268 576v22M292 576v22M316 576v22M340 576v22" stroke="#4f4a18" stroke-width="4"/>
          <path d="M206 432h122v138H206z" stroke="#302f1a" stroke-width="6"/>
          <g fill="#0d3347" opacity=".5">
            <circle cx="266" cy="494" r="46"/><circle cx="1130" cy="360" r="90" opacity=".5"/>
            <path d="M1090 224h70v16h-70zM990 290h40v40h-40zM1220 280h34v28h-34zM990 410h50v50h-50zM1090 508h70v16h-70zM1210 430h40v40h-40zM584 432h120v36H584z" opacity=".6"/>
          </g>
          <path d="M95 85h12v40H95z" stroke="#b9bdc2" stroke-width="3"/>
          <path d="M748 584q14-14 30 0" stroke="#7f6a86" stroke-width="6"/>
        </g>
        <path d="M1184.500 0v1400" stroke="#dfe1e3" stroke-width="1.400"/>
        <!-- selection frame with grips -->
        <g transform="translate(680 206)">
          <rect x="17" y="25" width="485" height="176" fill="none" stroke="#3560c8" stroke-width="4"/>
          <rect x="17" y="25" width="485" height="176" fill="none" stroke="#dfe6f7" stroke-width="1.500"/>
          <path d="M7 14h21v21H7zM491 14h21v21h-21zM7 190h21v21H7zM491 190h21v21h-21zM244 20h31v9h-31zM244 196h31v9h-31zM13 97h9v31h-9zM497 97h9v31h-9z" fill="#0b80ff" stroke="#2a6fae" stroke-width=".6"/>
        </g>
        <!-- ucs icon -->
        <path d="M466.500 539.500h10v10h-10zM471.500 544v-49M471 544.500h51" fill="none" stroke="#e0e2e3" stroke-width="1.400"/>
        <text class="ucs" x="473" y="490">Y</text>
        <text class="ucs" x="526" y="543">X</text>
      </svg>

      <p class="view-label">[−][俯视][二维线框]</p>

      <div class="view-cube">
        <svg width="130" height="130">
          <circle cx="65" cy="65" r="54" fill="none" stroke="#464d56" stroke-width="12"/>
          <path d="M40 40h51v51H40z" fill="#a3a5a7"/><path d="M49 49h33v32H49z" fill="#8f979f"/>
          <g class="cube-dir"><text x="65" y="16">北</text><text x="9" y="72">西</text><text x="121" y="72">东</text><text x="65" y="129">南</text></g>
          <text class="cube-top" x="65" y="75">上</text>
        </svg>
        <button class="wcs">WCS<i></i></button>
      </div>

      <div class="nav-bar">
        <button aria-label="控制盘"><svg width="24" height="24"><rect x="2" y="2" width="20" height="20" rx="9"/><rect x="7" y="7" width="10" height="10" rx="5"/></svg></button><i></i>
        <button aria-label="平移"><svg width="24" height="24"><path d="M7 22l-5-8c-1-2 1-3 2-1l3 3V4c0-2 2-2 2 0v7-9c0-2 3-2 3 0v9-8c0-2 3-2 3 0v9l1-5c1-2 3-1 2 1l-1 9-2 6z"/></svg></button>
        <button aria-label="范围缩放"><svg width="24" height="24"><path d="M2 2l18 16M20 2L2 18M2 7V2h5M15 2h5v5M2 13v5h5M20 19l3 4"/><circle cx="17" cy="17" r="4" fill="#5c6065"/></svg></button><i></i>
        <button aria-label="动态观察"><svg width="24" height="24"><path d="M9 22V5H6l5-4 5 4h-3v17zM2 12c0-5 20-5 20 0s-20 5-20 0M5 19l-3-3"/></svg></button><i></i>
        <button aria-label="ShowMotion"><svg width="24" height="24"><path d="M1 1h5v5H1zM9 1h5v5H9zM17 1h5v5h-5zM1 10h16v13H1zM6 13l6 4-6 4z"/></svg></button>
      </div>

      <div class="history">
        <p>输入剪裁选项</p>
        <p class="prompt">[开(ON)/关(OFF)/剪裁深度(C)/删除(D)/生成多段线(P)/新建边界(N)] &lt;新建边界&gt;: P</p>
        <p class="current">命令:</p>
      </div>
      <div class="command-bar">
        <i class="grip"></i>
        <button aria-label="关闭命令行"><svg width="12" height="12"><use href="#close"/></svg></button>
        <button aria-label="自定义命令行"><svg width="16" height="16"><path d="M2 14l8-8M9 7c-1-4 2-6 5-6l-3 3 2 2 2-2c1 3-2 6-5 4" fill="#c3c7cc" stroke="#c3c7cc" stroke-width="2"/></svg></button>
        <label>
          <svg width="26" height="16"><path d="M1 2h14v12H1zM1 4h14M3 7l2 2-2 2M6 11h4" fill="none" stroke="#85888b" stroke-width="1.400"/><path d="M19 6h7l-3.500 5z" fill="#777a7d"/></svg>
          <input type="text" aria-label="命令" placeholder="键入命令">
          <svg width="8" height="8"><path d="M0 6h8L4 1z" fill="#4d5155"/></svg>
        </label>
      </div>
    </div>
    <aside class="dock">
      <div class="tool-column" id="match-tools"></div>
      <div class="tool-column" id="arch-tools"></div>
    </aside>
  </main>

  <footer class="status-bar">
    <nav class="layout-tabs">
      <a href="#" class="active">模型</a><a href="#">布局1</a><a href="#">布局2</a>
      <button aria-label="新建布局"><svg width="10" height="10"><path d="M5 1v8M1 5h8" stroke="#b3b7bd" stroke-width="1.800"/></svg></button>
    </nav>
    <div class="status-tools">
      <button class="model">模型</button>
      <button class="on" aria-label="栅格"><svg width="18" height="18"><path d="M5 1v16M9 1v16M13 1v16M1 5h16M1 9h16M1 13h16" stroke="#fff"/></svg></button>
      <button class="with-caret" aria-label="捕捉"><svg width="18" height="18"><path d="M2 3h14M2 9h14M2 15h14" stroke="#d5d8dc" stroke-width="2" stroke-dasharray="2 4"/></svg><svg width="8" height="8"><use href="#caret"/></svg></button>
      <button class="on gap" aria-label="动态输入"><svg width="18" height="18"><path d="M5 2v8M1 6h8" stroke="#fff"/><path d="M8 11h9v5H8z" fill="#fff"/></svg></button>
      <button class="on" aria-label="正交"><svg width="18" height="18"><path d="M4 1v15h13M4 10h6v6" fill="none" stroke="#fff" stroke-width="1.300"/></svg></button>
      <button class="with-caret" aria-label="极轴"><svg width="18" height="18"><circle cx="8" cy="10" r="6" fill="none" stroke="#d5d8dc"/><path d="M8 10l8-8M8 10h8" stroke="#d5d8dc"/></svg><svg width="8" height="8"><use href="#caret"/></svg></button>
      <button class="with-caret" aria-label="等轴测"><svg width="18" height="18"><path d="M3 2l12 14" stroke="#aeb3ba"/><path d="M9 1v16M9 9l5-4" stroke="#7fc48c"/></svg><svg width="8" height="8"><use href="#caret"/></svg></button>
      <button class="on" aria-label="对象捕捉追踪"><svg width="18" height="18"><path d="M16 2L3 15h14" fill="none" stroke="#fff" stroke-width="1.300"/></svg></button>
      <button class="on" aria-label="对象捕捉"><svg width="18" height="18"><path d="M7 4h9v12H4V8M1 1h5v5H1z" fill="none" stroke="#fff" stroke-width="1.300"/></svg></button>
      <button class="slim" aria-label="对象捕捉列表"><svg width="8" height="8"><use href="#caret"/></svg></button>
      <button class="on gap" aria-label="注释可见性"><svg width="18" height="18"><use href="#compass"/><circle cx="14" cy="4" r="2.500" fill="none" stroke="#fff"/></svg></button>
      <button aria-label="自动缩放"><svg width="18" height="18"><use href="#compass"/><path d="M14 1l-2 4h2l-1 4 4-5h-2z" fill="#fff"/></svg></button>
      <button aria-label="注释比例"><svg width="18" height="18"><use href="#compass"/></svg></button>
      <button class="scale">1:1 / 100%<svg width="8" height="8"><use href="#caret"/></svg></button>
      <button class="with-caret" aria-label="切换工作空间"><svg width="16" height="16"><use href="#gear"/></svg><svg width="8" height="8"><use href="#caret"/></svg></button>
      <button class="wide" aria-label="注释监视器"><svg width="18" height="18"><path d="M9 1v16M1 9h16" stroke="#e5e6e8" stroke-width="2"/></svg></button>
      <button class="wide" aria-label="隔离对象"><svg width="18" height="18"><path d="M2 2h6v6H2zM8 16l3-6 3 6z" fill="none" stroke="#c8ccd1"/><circle cx="14" cy="6" r="3" fill="none" stroke="#c8ccd1"/></svg></button>
      <button class="wide gap" aria-label="硬件加速"><svg width="18" height="18"><path d="M2 9v7h14v-6l-4-3H8" fill="none" stroke="#cf9b76" stroke-width="1.300"/><path d="M1 7V3c0-3 5-3 5 0v4H3V4" fill="none" stroke="#cf9b76"/></svg></button>
      <button class="wide gap" aria-label="全屏显示"><svg width="18" height="18"><path d="M1 3h16v12H1z" fill="none" stroke="#c8ccd1"/><path d="M11 5h4v4zM3 9v4h4z" fill="#c8ccd1"/></svg></button>
      <button aria-label="自定义"><svg width="18" height="18"><path d="M1 3h16M1 9h16M1 15h16" stroke="#d5d8dc" stroke-width="2"/></svg></button>
    </div>
  </footer>

  <div class="taskbar">
    <button class="task win" aria-label="开始"><svg width="16" height="16"><path d="M0 2l7-1v6H0zM8 1l8-1v7H8zM0 8h7v7l-7-1zM8 8h8v8l-8-1z" fill="#fff"/></svg></button>
    <i class="handle"></i>
    <button class="task" aria-label="Internet Explorer"><svg width="24" height="24"><path d="M19 9a7 7 0 1 0 0 7h-4a4 4 0 0 1-6-2h11c0-2 0-4-1-5zM9 11a4 4 0 0 1 6 0z" fill="#4cc0f0"/><path d="M3 22c-5-2 3-16 13-20 8-3 6 4 5 5 1-8-9-3-14 5-4 6-5 9 2 8-2 2-4 3-6 2z" fill="#f3c434"/></svg></button>
    <button class="task open" aria-label="文件资源管理器"><svg width="24" height="24"><path d="M1 3h9l2 2h11v5H1z" fill="#d9a035"/><path d="M1 7h22v13H1z" fill="#fbd66f"/><path d="M5 20v-6h14v6h-4v-3H9v3z" fill="#3d8fd6"/></svg></button>
    <button class="task" aria-label="3ds Max"><svg width="24" height="24"><path d="M0 0h24v24H0z" fill="#dcefeb"/><path d="M7 4h9l-1 5 2 3-2 5H7v-3h5v-3H9V8h3l1-1H7z" fill="#12877c"/><path d="M13 20h8v2h-8z" fill="#47b5a8"/></svg></button>
    <button class="task open" aria-label="QQ 浏览器"><svg width="24" height="24"><circle cx="12" cy="12" r="9" fill="none" stroke="#2f8fe8" stroke-width="5"/><path d="M12 23a4 4 0 0 1 0-7c2-5 8-3 8 1 4 0 4 6 1 6z" fill="#fff"/></svg></button>
    <button class="task open active" aria-label="AutoCAD"><svg width="24" height="24"><path d="M0 0h24v24H0z" fill="#f6e3df"/><path d="M4 20L9 3h6l5 17h-4l-1-5H9l-1 5zM10 12h4l-2-6z" fill="#b0202a"/></svg></button>
    <div class="tray">
      <svg width="16" height="18"><path d="M5 3c0-3 4-3 4 0v7a4 4 0 1 1-4 0zM12 3h3M12 6h3M12 9h2" fill="none" stroke="#eee" stroke-width="1.300"/><circle cx="7" cy="13" r="2" fill="#eee"/></svg>
      <svg width="16" height="16"><path d="M8 0c2 0 3 2 3 4 2-1 5 0 5 2s-2 3-4 3c2 1 3 4 1 6s-4 0-5-2c-1 2-3 4-5 2s-1-5 1-6C2 9 0 8 0 6s3-3 5-2c0-2 1-4 3-4z" fill="#f2949b"/><circle cx="8" cy="8" r="2" fill="#fff0d8"/></svg>
      <svg width="16" height="16"><ellipse cx="6" cy="6" rx="6" ry="5" fill="#28c445"/><ellipse cx="11" cy="11" rx="5" ry="4" fill="#e7f3e5"/><path d="M4 5h1M8 5h1M9 10h1M12 10h1" stroke="#222"/></svg>
      <svg width="16" height="18"><path d="M5 6V1h6v5M3 6h9v11H3zM9 14l2 2 5-5" fill="none" stroke="#ddd" stroke-width="1.200"/></svg>
      <svg width="16" height="16"><circle cx="8" cy="8" r="7" fill="#0b0b0b"/><path d="M2 1l11 12" stroke="#bbb" stroke-width="2"/><path d="M3 9q4-1 9 5-6 3-9-5z" fill="#ccc"/><circle cx="10" cy="5" r="2" fill="none" stroke="#999"/></svg>
      <svg width="16" height="18"><rect x="4" width="8" height="12" rx="2" fill="#fff"/><path d="M3 10c0 5 10 5 10 0M8 13v4M5 17h6" fill="none" stroke="#fff"/></svg>
      <svg width="16" height="16"><path d="M2 15C3 8 7 4 15 2M6 15c0-5 4-8 9-9M10 15c0-3 2-5 5-5" fill="none" stroke="#ddd" stroke-width="1.300"/><circle cx="14" cy="14" r="1.500" fill="#ddd"/></svg>
      <svg width="16" height="16"><path d="M1 6h2l4-4v12l-4-4H1zM9 5q3 3 0 6M11 3q5 5 0 10M13 1q6 7 0 14" fill="none" stroke="#ddd"/></svg>
      <svg width="16" height="16"><path d="M7 7C1 6-1 12 2 14s5-2 5-2l6-11c2-1 3 1 2 2L9 13q-2 2-1-3l3 1q2-1 4-2" fill="none" stroke="#eee" stroke-width="1.300"/></svg>
      <span class="ime">英</span>
      <time>22:33<br>2020/8/28</time>
      <i class="desktop"></i>
    </div>
  </div>

  <div class="timer">01:49</div>

  <script src="dock.js"></script>
</body>
</html>
```
FILE: styles.css
```
* {
  box-sizing: border-box;
}

body {
  margin: 0;
  height: 100vh;
  display: flex;
  flex-direction: column;
  overflow: hidden;
  background-color: #1f262f;
  color: #e3e5e8;
  font-family: "Noto Sans", "Noto Sans CJK SC", sans-serif;
  font-size: 12px;
  line-height: 16px;
}

button,
input,
select {
  font: inherit;
  color: inherit;
  background: none;
  border: 0;
  margin: 0;
  padding: 0;
}

select {
  appearance: none;
}

a {
  color: inherit;
  text-decoration: none;
}

h1,
h2,
p {
  margin: 0;
  font-size: 12px;
  font-weight: normal;
}

i {
  display: block;
}

svg {
  display: block;
  flex: none;
}

.defs {
  position: absolute;
}

button {
  display: flex;
  align-items: center;
  justify-content: center;
  white-space: nowrap;
}

/* header */

.app-header {
  display: grid;
  grid-template-columns: 41px 1fr;
  grid-template-rows: 23px 21px;
  border-bottom: 1px solid #3d4550;
}

.app-button {
  grid-row: 1 / 3;
  align-self: start;
  height: 41px;
  background: linear-gradient(#c9c9c9, #7a7a7a);
  border: 1px solid #111;
}

.title-row,
.menu-row {
  display: flex;
  align-items: center;
}

.menu-row {
  padding-top: 2px;
}

.quick-access {
  display: flex;
  padding-left: 5px;
}

.quick-access button {
  width: 24px;
  height: 22px;
}

.quick-access button.slim {
  width: 12px;
}

.workspace {
  display: flex;
  align-items: center;
  width: 178px;
  height: 20px;
  gap: 4px;
  padding: 0 2px;
  margin-left: 1px;
  background-color: #3a4250;
}

.workspace select {
  flex: 1;
}

.overflow {
  width: 20px;
}

.app-title {
  display: flex;
  gap: 17px;
  margin-left: auto;
}

.info-center {
  display: flex;
  align-items: center;
  margin-left: auto;
}

.info-center input {
  width: 178px;
  height: 20px;
  margin: 0 4px;
  padding: 0 3px;
  background-color: #454d5e;
}

.info-center input::placeholder,
.command-bar input::placeholder {
  color: #b9bdc5;
  font-style: italic;
}

.info-center button {
  min-width: 18px;
}

.info-center .login {
  gap: 6px;
  margin-left: 8px;
}

.info-center .login-caret {
  margin: 0 4px 0 54px;
}

.info-center .a360 {
  gap: 4px;
  margin-left: 6px;
  padding-right: 8px;
  border-right: 1px solid #48505c;
}

.help {
  gap: 8px;
  margin-left: 10px;
}

.help b {
  width: 15px;
  height: 15px;
  border-radius: 8px;
  line-height: 15px;
  background-color: #e9ebef;
  color: #1c3a6a;
}

.window-buttons {
  display: flex;
  gap: 13px;
  margin: 0 6px 0 65px;
}

.window-buttons.small {
  gap: 6px;
  margin: 0 2px 0 auto;
}

.menu {
  display: flex;
  padding-left: 1px;
  color: #a6abb1;
}

.menu a {
  padding: 0 12px 0 13px;
}

.menu .extra {
  padding: 0 7px 0 8px;
}

/* ribbon */

.ribbon-tabs {
  display: flex;
  padding: 3px 0 0 3px;
  color: #aeb2b8;
}

.ribbon-tabs a {
  height: 18px;
  padding: 0 10px;
  line-height: 18px;
}

.ribbon-tabs .active {
  background-color: #3b4453;
  color: #fff;
}

.ribbon-tabs button {
  gap: 6px;
  margin-left: 22px;
}

.ribbon {
  display: flex;
  padding-left: 2px;
}

.panel {
  display: flex;
  flex-direction: column;
  height: 97px;
  background-color: #3b4453;
  border-right: 1px solid #222933;
}

.panel-body {
  position: relative;
  display: flex;
  height: 81px;
  padding-top: 5px;
}

.panel h2 {
  position: relative;
  display: flex;
  align-items: center;
  justify-content: center;
  gap: 5px;
}

.panel .launch {
  position: absolute;
  right: 3px;
}

.big {
  width: 40px;
  flex-direction: column;
  justify-content: flex-start;
  padding-top: 2px;
}

.big svg:first-child {
  margin-bottom: 4px;
}

.stack {
  display: flex;
  flex-direction: column;
}

.stack button,
.tool-row,
.combo {
  height: 24px;
}

.stack button {
  justify-content: flex-start;
  gap: 5px;
}

.stack.icons button,
.tool-row button {
  min-width: 24px;
  padding-left: 4px;
}

.stack .on {
  background-color: #3a5a78;
  outline: 1px solid #6fb0e0;
  outline-offset: -1px;
}

.stack .caret {
  margin-left: 5px;
}

.tool-row {
  display: flex;
}

.combo {
  display: flex;
  align-items: center;
  gap: 7px;
  padding: 0 3px 0 4px;
  background-color: #4a5567;
  border: 2px solid #3b4453;
  border-width: 2px 0;
  outline: 1px solid #2b333f;
  outline-offset: -2px;
}

.combo select {
  flex: 1;
}

.swatch {
  width: 14px;
  height: 14px;
  background-color: #fff;
  border: 1px solid #111;
}

.swatch.plain {
  width: 16px;
  height: 16px;
  border-color: #999;
  margin: 0 4px 0 8px;
}

.rule {
  width: 64px;
  height: 1px;
  background-color: #e3e5e8;
}

.combo.line {
  gap: 2px;
}

.draw { width: 210px; }
.modify { width: 227px; }
.annotate { width: 155px; }
.layers { width: 253px; }
.block { width: 134px; }
.properties { width: 244px; }
.group { width: 68px; }
.utilities { width: 76px; }
.clipboard { width: 76px; }
.view { width: 60px; }

.draw .panel-body {
  padding-left: 1px;
}

.draw .stack {
  margin-left: 6px;
}

.draw .stack button {
  gap: 6px;
}

.modify .panel-body {
  gap: 14px;
  padding-left: 7px;
}

.annotate .panel-body {
  gap: 3px;
  padding-left: 5px;
}

.layers .panel-body,
.properties .panel-body {
  padding-left: 1px;
}

.layers .stack {
  flex: 1;
  padding-right: 3px;
}

.block .panel-body {
  gap: 5px;
  padding-left: 1px;
}

.properties .stack:nth-child(3) {
  flex: 1;
  padding-right: 3px;
}

.properties h2 {
  padding-right: 10px;
}

.prop-icons button {
  width: 20px;
  justify-content: center;
}

.color-wheel {
  width: 16px;
  height: 16px;
  border-radius: 8px;
  background: conic-gradient(#f5b13d, #e8563f, #d04fb0, #5a6fe0, #36b8c8, #59c15a, #f5b13d);
}

.pointer {
  position: absolute;
  left: 134px;
  top: 38px;
}

.group .panel-body {
  gap: 1px;
}

.utilities .panel-body,
.clipboard .panel-body {
  gap: 4px;
  padding-left: 5px;
}

.view .panel-body {
  padding-left: 10px;
}

.view h2 {
  padding-right: 12px;
}

/* file tabs */

.file-tabs {
  display: flex;
  gap: 2px;
  height: 31px;
  padding: 5px 0 0 20px;
  border-bottom: 4px solid #3b4453;
  color: #b3b7bd;
}

.file-tabs a {
  display: flex;
  align-items: center;
  justify-content: space-between;
  width: 135px;
  height: 22px;
  padding: 0 10px;
  border-radius: 8px 10px 8px 8px;
  background-color: #2b3340;
}

.file-tabs .start {
  width: 124px;
  padding-left: 12px;
}

.file-tabs .active {
  width: 122px;
  border-radius: 8px 10px 0 0;
  background-color: #3b4453;
  color: #e3e5e8;
}

.file-tabs button {
  width: 26px;
  height: 20px;
  margin: 1px 0 0 4px;
  border-radius: 8px;
  background-color: #2b3340;
}

/* drawing area */

.workspace-area {
  flex: 1;
  min-height: 0;
  display: flex;
}

.canvas {
  position: relative;
  flex: 1;
  overflow: hidden;
  background-color: #20272f;
}

.drawing {
  position: absolute;
  left: 0;
  top: 0;
}

.ucs {
  font: 18px Lato, sans-serif;
  fill: #e0e2e3;
}

.view-label {
  position: absolute;
  left: 3px;
  top: 5px;
  font-size: 13px;
}

.view-cube {
  position: absolute;
  top: 17px;
  right: 18px;
  display: flex;
  flex-direction: column;
  align-items: center;
  gap: 22px;
}

.view-cube svg {
  overflow: visible;
}

.cube-dir {
  font-size: 18px;
  fill: #a9adb1;
  text-anchor: middle;
}

.cube-top {
  font-size: 28px;
  fill: #5b636d;
  text-anchor: middle;
}

.wcs {
  width: 48px;
  height: 18px;
  gap: 6px;
  border: 1px solid #9a9ea8;
  border-radius: 4px;
  background-color: #858995;
  color: #33373d;
  font-family: "Liberation Sans", sans-serif;
  font-size: 11px;
}

.wcs i {
  width: 8px;
  height: 4px;
  border: 1px solid #a9adb8;
}

.nav-bar {
  position: absolute;
  top: 212px;
  right: 4px;
  display: flex;
  flex-direction: column;
  align-items: center;
  justify-content: space-between;
  width: 32px;
  height: 212px;
  padding: 18px 0;
  border-radius: 4px;
  background-color: #5c6065;
}

.nav-bar svg {
  fill: none;
  stroke: #43474c;
  stroke-width: 1.5;
}

.nav-bar i {
  border: 3px solid transparent;
  border-top-color: #43474c;
  border-bottom-width: 0;
}

.history {
  position: absolute;
  left: 452px;
  bottom: 29px;
  display: flex;
  flex-direction: column;
  align-items: flex-start;
  gap: 4px;
  color: #d5d6d6;
  font-family: "Liberation Mono", "Noto Sans CJK SC", monospace;
}

.history p {
  padding: 0 3px;
  border-radius: 2px;
  background-color: #55585a;
  font-size: 13px;
  line-height: 16px;
}

.history .prompt {
  padding: 0 12px 0 3px;
  font-size: 12px;
}

.history .current {
  background-color: #6a6c6d;
  color: #fff;
}

.command-bar {
  position: absolute;
  left: 390px;
  right: 391px;
  bottom: 2px;
  display: flex;
  align-items: center;
  height: 25px;
  background-color: #272e38;
}

.grip {
  width: 6px;
  height: 18px;
  margin: 0 4px;
  background: repeating-linear-gradient(#8f949a 0 2px, transparent 2px 4px);
}

.command-bar button {
  margin-right: 8px;
}

.command-bar label {
  flex: 1;
  display: flex;
  align-items: center;
  gap: 6px;
  height: 25px;
  padding: 0 4px;
  background-color: #babdbf;
}

.command-bar input {
  flex: 1;
  font-size: 13px;
  color: #333;
}

.command-bar input::placeholder {
  color: #55585b;
}

.dock {
  display: flex;
  align-items: flex-start;
  gap: 3px;
  width: 60px;
  padding-left: 3px;
  overflow: hidden;
  background-color: #3b4453;
}

.tool-column {
  width: 25px;
  border: 1px solid #232b37;
  border-width: 0 1px 2px;
}

.tool-column button {
  width: 23px;
  height: 22px;
}

.tool-column svg {
  overflow: visible;
}

.tool-column text {
  font-family: "Liberation Sans", sans-serif;
  font-weight: bold;
}

.tool-column hr {
  height: 2px;
  margin: 2px;
  border: 0;
  background-color: #e3e3e3;
}

.tool-column .dots {
  width: 14px;
  height: 3px;
  margin: 3px 4px;
  background: repeating-linear-gradient(90deg, #b9bfca 0 1px, transparent 1px 2px);
}

/* status bar */

.status-bar {
  display: flex;
  justify-content: space-between;
  height: 29px;
  border-top: 1px solid #3d4550;
}

.layout-tabs {
  display: flex;
  gap: 5px;
  padding-left: 14px;
  color: #b3b7bd;
}

.layout-tabs a,
.layout-tabs button {
  height: 18px;
  padding: 0 9px;
  border-radius: 0 0 8px 8px;
  background-color: #2b3340;
  line-height: 18px;
}

.layout-tabs .active {
  background-color: #3b4453;
  color: #fff;
  font-weight: bold;
}

.status-tools {
  display: flex;
  gap: 2px;
  padding: 2px 3px 0 0;
}

.status-tools button {
  width: 22px;
  height: 23px;
  background-color: #323a47;
}

.status-tools .model {
  width: 27px;
}

.status-tools .on {
  background-color: #5286b8;
}

.status-tools .with-caret {
  width: 38px;
  gap: 7px;
}

.status-tools .slim {
  width: 14px;
}

.status-tools .wide {
  width: 25px;
}

.status-tools .gap {
  margin-left: 2px;
}

.status-tools .scale {
  width: 74px;
  gap: 3px;
  padding-left: 4px;
}

/* taskbar */

.taskbar {
  display: flex;
  height: 40px;
  background-color: #3a372d;
}

.task {
  width: 40px;
  margin: 0 5px 0 4px;
  border-bottom: 2px solid transparent;
  border-top: 2px solid transparent;
}

.task.win {
  margin-right: 10px;
}

.task.open {
  border-bottom-color: #7fb2dc;
}

.task.active {
  width: 48px;
  margin: 0;
  border-top-color: #625f58;
  background-color: #625f58;
}

.handle {
  width: 4px;
  height: 16px;
  margin: 12px 13px 0 0;
  border: 1px solid #67645a;
  border-width: 0 1px;
}

.tray {
  display: flex;
  align-items: center;
  gap: 8px;
  margin-left: auto;
}

.tray .ime {
  margin-right: 4px;
  font-size: 17px;
  line-height: 20px;
}

.tray time {
  width: 64px;
  text-align: center;
  line-height: 18px;
}

.tray .desktop {
  width: 4px;
  height: 40px;
  margin-left: -2px;
  border-left: 1px solid #6d6a60;
}

/* recorder bubble */

.timer {
  position: absolute;
  right: 123px;
  top: 104px;
  width: 50px;
  height: 50px;
  border: 3px solid #e6edf5;
  border-radius: 25px;
  background: linear-gradient(#3d83e6 30%, #3f97ea 65%, #5cc4ee);
  color: #fff;
  font-size: 14px;
  line-height: 44px;
  text-align: center;
}
```
FILE: dock.js
```
const brush = '<path d="M5 12l4-3 4 2-2 4-5-1z" fill="#a65a1e"/><path d="M11 10l4-4" stroke="#5d3210" stroke-width="2"/>';
const pick = '<path d="M3 14V7h9v7M1 13h3v2H1zM6 13h3v2H6zM11 13h3v2h-3z" fill="none" stroke="#111"/>';
const rings = '<ellipse cx="6" cy="3" rx="5" ry="2"/><ellipse cx="6" cy="7" rx="5" ry="2"/><ellipse cx="6" cy="11" rx="5" ry="2"/>';
const pair = '<path d="M2 2h4v4H2z" fill="none" stroke="#111" stroke-width="1.500"/><circle cx="4" cy="11" r="2.300" fill="none" stroke="#111" stroke-width="1.500"/><path d="M0 .5h8M8.500 0v16" stroke="#666" stroke-dasharray="1 1"/>';
const sheets = '<path d="M5 2h9l-3 4H2zM3 7l-1 2h9l3-4M3 10l-1 2h9l3-4" fill="#fff" stroke="#555"/>';
const door = '<path d="M2 2h6v12H2z" fill="#cfe6fb" stroke="#2b6cae" stroke-width="1.500"/>';
const ruler = '<path d="M11 1h4v14h-4zM11 4h2M11 7h2M11 10h2M11 13h2" fill="#bfe0fa" stroke="#2b78b8"/>';
const plus = '<path d="M1 3h6M4 0v6" stroke="#d11a1a" stroke-width="2"/>';
const stroke = (shape, color) => `<g fill="none" stroke="${color}">${shape}</g>`;
const text = (value, x, y, size, color) => `<text x="${x}" y="${y}" font-size="${size}" fill="${color}">${value}</text>`;
const star = '<path d="M10 5v8M6 9h8M7 6l6 6M13 6l-6 6" stroke="#e8a92c" stroke-width="1.500"/>';
const rainbow = '<path d="M0 0h3v6H0z" fill="#e020c0"/><path d="M3 0h3v6H3z" fill="#7a28e0"/><path d="M6 0h3v6H6z" fill="#25b0e0"/><path d="M9 0h3v6H9z" fill="#a5dc28"/><path d="M12 0h4v6h-4z" fill="#f04020"/>';

const matchTools = [
  '<path d="M0 1h16v4H0zM1 6h4v9H1z" fill="#5a9be0" stroke="#1d4f94"/>' + brush,
  pick + '<path d="M6 11h8M11 8l4 3-4 3" fill="none" stroke="#d11a1a" stroke-width="1.500"/>' + '<path d="M7 4l4-3 3 3-3 3z" fill="#a65a1e"/>',
  text('A', 1, 10, 10, '#1d5a80') + text('4', 9, 9, 8, '#888') + brush,
  '-',
  sheets + brush,
  rainbow + brush,
  '<path d="M3 7l-1 2h9l3-4M3 10l-1 2h9l3-4" fill="#fff" stroke="#555"/>' + rainbow + brush,
  '<path d="M0 0h16v16H0z" fill="#cfe2f5"/><path d="M2 2h6v6H2zM2 11h4v4M10 2v8" fill="none" stroke="#2b6cae" stroke-width="1.500"/>' + brush,
  '-',
  text('A', 1, 10, 9, '#333') + text('B', 8, 9, 10, '#2b6cae') + brush,
  text('A', 1, 11, 11, '#333') + text('s', 10, 8, 8, '#1d7a80') + brush,
  text('A', 1, 11, 10, '#333') + text('h', 9, 8, 9, '#1d7a80') + brush,
  '-',
  '<path d="M15 3H5a2 2 0 0 0 0 4h8M1 13q0-4 5-4" fill="none" stroke="#111" stroke-width="1.500"/>' + brush,
  '<path d="M0 2h16M0 5h16M0 8h16" stroke="#111" stroke-width="1.500" stroke-dasharray="3 1"/>' + brush,
  '<path d="M2 14V6l4-4v8zM6 12V5l4-3" fill="#fff" stroke="#111"/>' + text('T', 10, 7, 8, '#d11a1a') + brush
];

const archTools = [
  pick + '<path d="M5 2h8v5H5z" fill="#fff" stroke="#111"/>',
  '-',
  pick + '<path d="M8 1h6v8H8z" fill="#ddd" stroke="#444"/><path d="M9 3h4M9 5h4M9 7h4" stroke="#444" stroke-dasharray="1 1"/>',
  pick + '<path d="M8 1h6v8H8z" fill="#fff" stroke="#444"/><path d="M9 5h4" stroke="#444"/>',
  pick,
  '-',
  stroke('<ellipse cx="6" cy="4" rx="5" ry="3"/>', '#555') + '<path d="M10 7h5l-2 3v6h-1v-6z" fill="#4a80b8"/>',
  stroke(rings, '#555') + '<path d="M1 9h9v4H1z" fill="#7fb2dc"/><path d="M10 7h5l-2 3v6h-1v-6z" fill="#4a80b8"/>',
  stroke(rings, '#555') + '<circle cx="12" cy="9" r="3" fill="#f7c93c"/><path d="M11 12h3v3h-3z" fill="#c28d1e"/>',
  stroke(rings, '#555') + '<circle cx="8" cy="9" r="3" fill="#f7c93c"/><circle cx="13" cy="9" r="3" fill="#f7c93c"/><path d="M7 12h2v3H7zM12 12h2v3h-2z" fill="#c28d1e"/>',
  '-',
  pair + star,
  pair + '<path d="M8 10l4-5 3 3-4 5z" fill="#7d1414"/><path d="M12 4l3-3" stroke="#111"/>',
  pair + '<circle cx="12" cy="4" r="2" fill="none" stroke="#888"/><path d="M14 8v3H9M11 9l-2 2 2 2" fill="none" stroke="#d11a1a" stroke-width="1.500"/>',
  pair + '<path d="M7 10l6-7 2 2-6 7z" fill="#c9a35e" stroke="#5d3210"/><path d="M11 14h5" stroke="#d11a1a"/>',
  pair + '<circle cx="12" cy="4" r="2" fill="none" stroke="#888"/><path d="M12 8v6M9 11h6" stroke="#d11a1a" stroke-width="2"/>',
  pair + '<path d="M12 2v6l3 6H9l3-6" fill="#f0b92c" stroke="#b8860b"/>',
  '-',
  '<path d="M1 4h5M4 1l3 3-3 3M9 4h5M12 1l3 3-3 3" fill="none" stroke="#4a80b8" stroke-width="1.500"/>' + text('YQ', 3, 14, 8, '#2b6cae') + '<path d="M0 12h3" stroke="#d11a1a" stroke-width="2"/>',
  '<path d="M4 2h10v13H4zM7 0h4v3H7zM6 6h6M6 8h6" fill="#fff" stroke="#356a94"/>' + text('X,Y', 1, 14, 7, '#111'),
  '<circle cx="8" cy="6" r="6" fill="#5a9be0"/><path d="M1 2l8 4-4 4z" fill="#d11a1a"/>' + text('Xml', 1, 14, 7, '#d11a1a'),
  '-',
  text('COM', 0, 8, 6, '#d11a1a') + '<circle cx="6" cy="9" r="3" fill="none" stroke="#666"/><path d="M9 11l5 4" stroke="#444" stroke-width="2"/>',
  '<path d="M5 0L0 7h4l-2 7 8-8H6l3-6z" fill="#f3c434" stroke="#555" stroke-width=".6"/>' + text('Q', 8, 13, 9, '#d11a1a')
];

const openingTools = [
  '<path d="M1 2h4v5H1zM6 2h4v5H6zM11 2h4v5h-4zM1 9h4v5H1zM6 9h4v5H6zM11 9h4v5h-4z" fill="#cfe6fb" stroke="#2b6cae"/>',
  door + '<path d="M11 6v9M7 8l8 5M15 8l-8 5" stroke="#7aa0c0" stroke-width="1.500"/>',
  pick + '<path d="M11 6v9M7 8l8 5M15 8l-8 5" stroke="#7aa0c0" stroke-width="1.500"/>',
  door + '<circle cx="11" cy="11" r="3.500" fill="#f7b93c" stroke="#c27a1e"/>',
  sheets + '<path d="M15 9l-5 5M10 10v4h4" fill="none" stroke="#111"/>',
  sheets + '<path d="M4 .5h11.500V14" fill="none" stroke="#2b6cae"/><path d="M14 9l-5 5M9 10v4h4" fill="none" stroke="#111"/>',
  sheets,
  '<path d="M5 1h9l-3 4H2z" fill="#fff" stroke="#d14040"/><path d="M3 6l-1 2h9l3-3" fill="none" stroke="#2b9c50"/><path d="M3 9l-1 3h9l3-4" fill="none" stroke="#2b6cae"/>',
  '-',
  door + star,
  door + '<path d="M10 2h5v5h-5zM10 9h5v5h-5z" fill="#cfe6fb" stroke="#2b6cae"/><path d="M3 8h5M5.500 5.500v5" stroke="#d11a1a"/>',
  '<path d="M8 3h7v11H8z" fill="#cfe6fb" stroke="#2b6cae"/>' + plus + text('m', 1, 14, 7, '#111') + star,
  '<path d="M8 3h7v11H8zM1 15q0-5 6-5" fill="#cfe6fb" stroke="#2b6cae"/>' + plus + star,
  door + ruler,
  '<path d="M1 4h4v9H1zM8 2h7v13H8zM0 1h6" fill="#cfe6fb" stroke="#2b6cae"/><path d="M5 8h6M9 5l4 3-4 3" fill="#d11a1a" stroke="#d11a1a"/>',
  '<path d="M1 2h7v5H1zM1 9h7v5H1z" fill="#cfe6fb" stroke="#2b6cae"/>' + ruler,
  '<path d="M1 2h11v12H1zM15 1v14" fill="#cfe6fb" stroke="#2b6cae"/><circle cx="6.500" cy="8" r="3" fill="none" stroke="#d04080" stroke-width="2"/>'
];

function renderTools(id, groups) {
  const column = document.getElementById(id);
  groups.forEach(function (tools) {
    let html = '<i class="dots"></i>';
    tools.forEach(function (tool) {
      if (tool === '-') {
        html += '<hr>';
      } else {
        html += `<button aria-label="tool"><svg width="16" height="16"><path d="M0 0h16v16H0z" fill="#ece9da"/>${tool}</svg></button>`;
      }
    });
    column.innerHTML += html;
  });
}

renderTools('match-tools', [matchTools]);
renderTools('arch-tools', [archTools, openingTools]);
```
